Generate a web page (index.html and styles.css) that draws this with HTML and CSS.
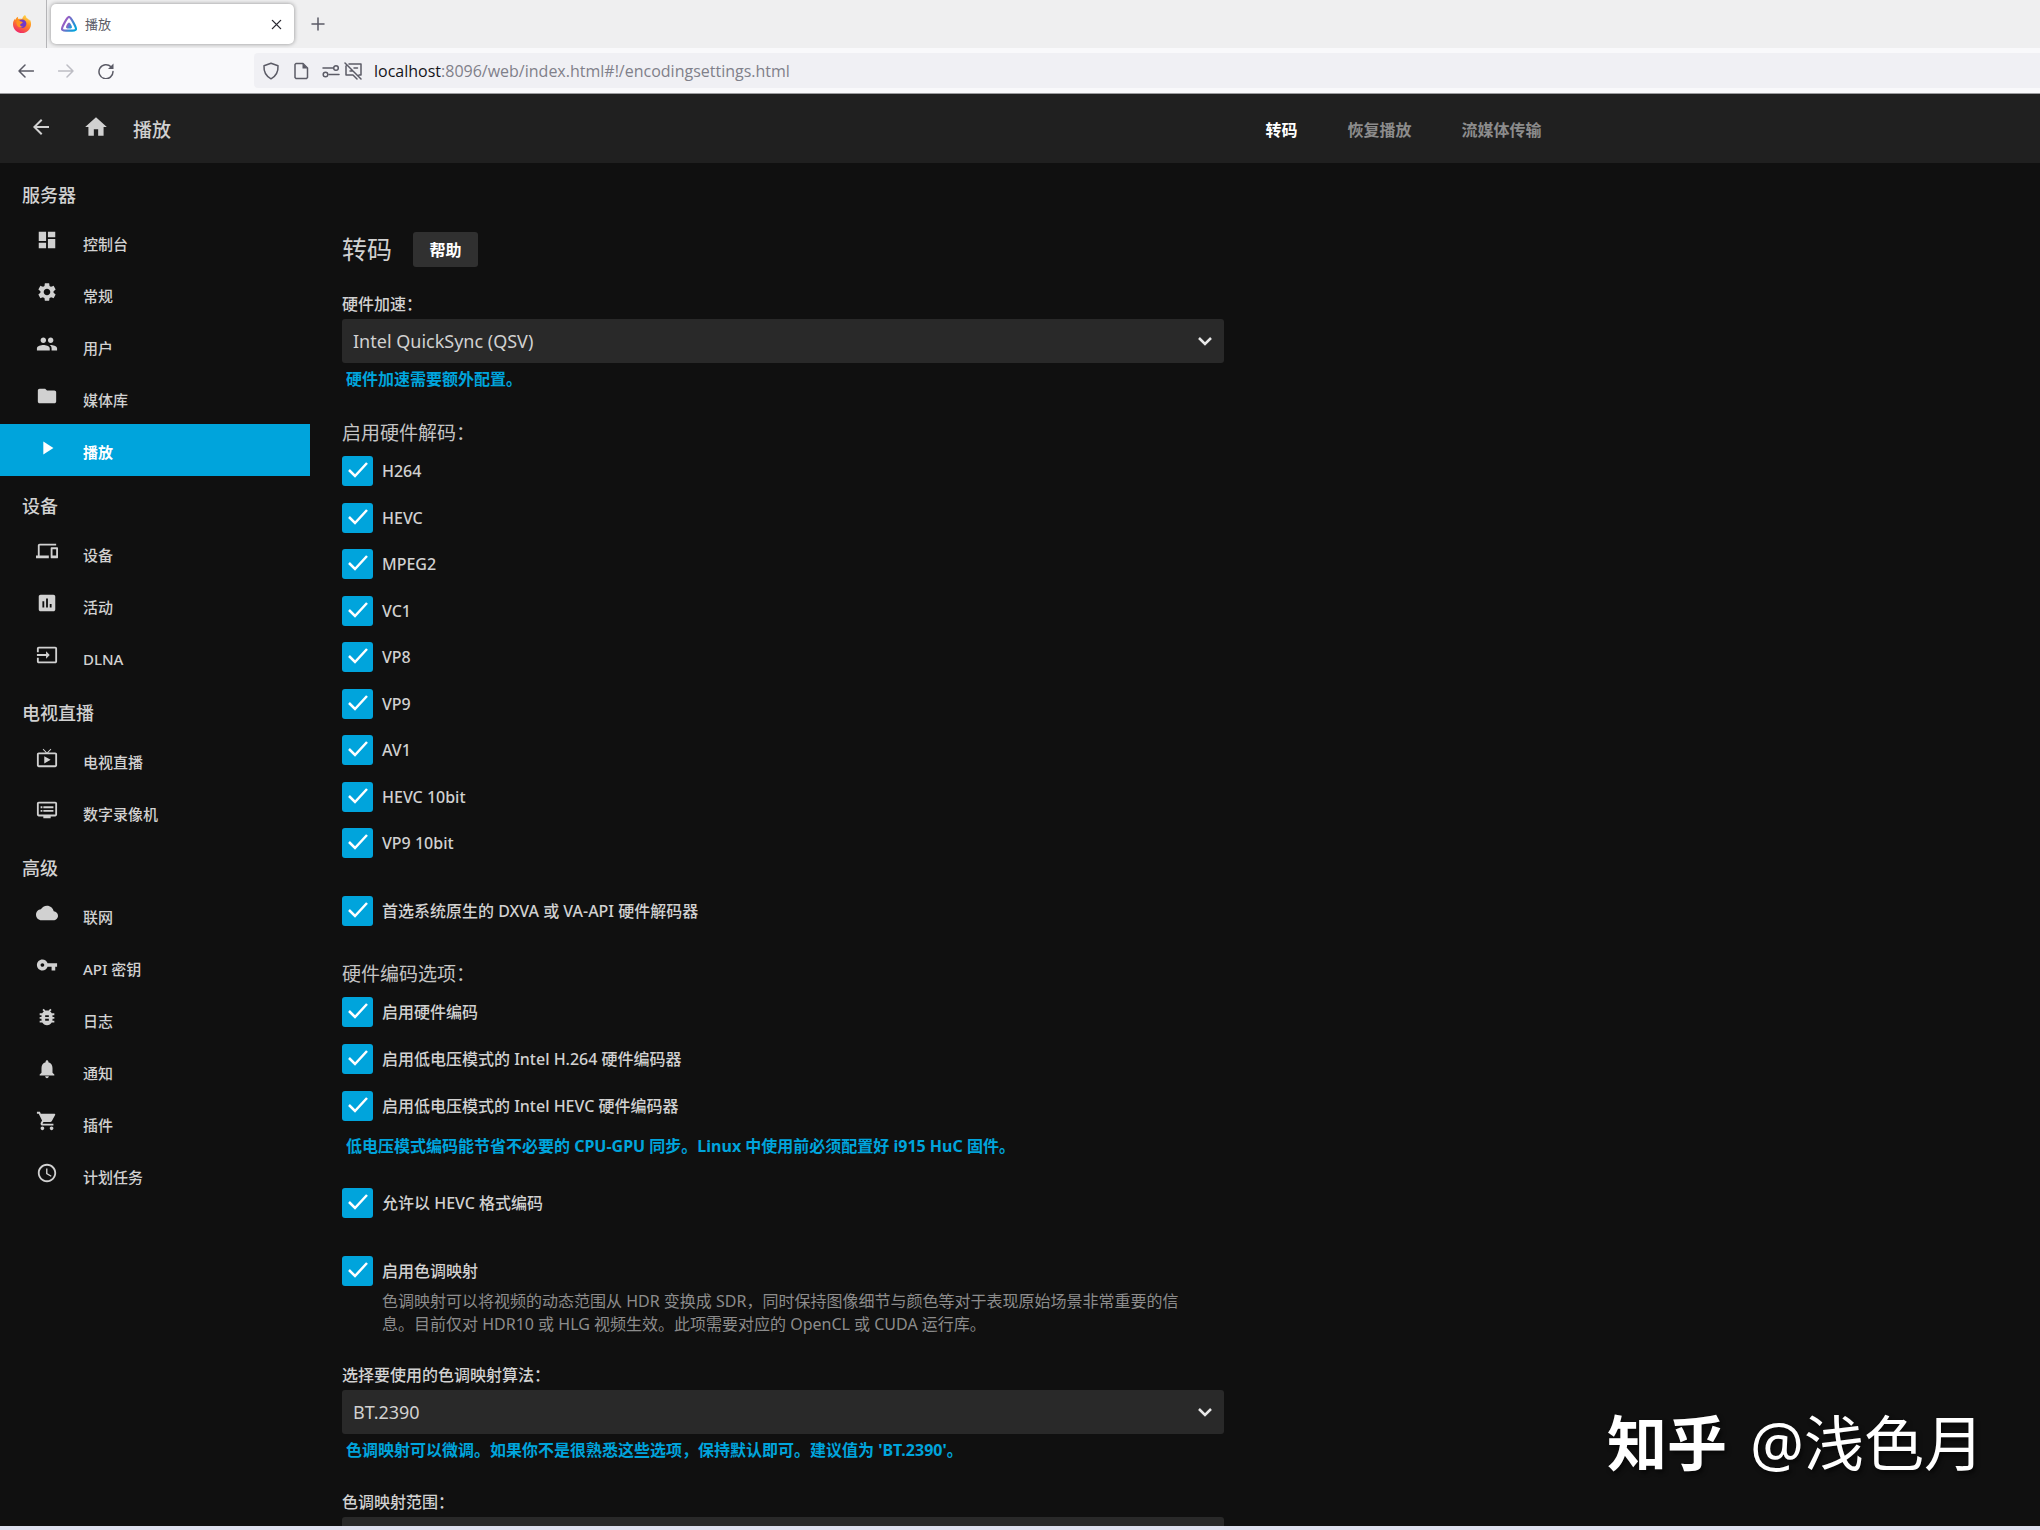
FILE: index.html
```html
<!DOCTYPE html>
<html lang="zh-CN">
<head>
<meta charset="utf-8">
<title>播放</title>
<link rel="stylesheet" href="styles.css">
</head>
<body>
<div class="browser">
  <div class="tabstrip">
    <div class="pinned">
      <svg class="firefox" viewBox="0 0 20 20" aria-hidden="true">
        <defs>
          <linearGradient id="flame" x1="0.8" y1="0" x2="0.3" y2="1"><stop offset="0" stop-color="#ffe14d"/><stop offset="0.45" stop-color="#ff8a1e"/><stop offset="1" stop-color="#f0246b"/></linearGradient>
        </defs>
        <path fill="url(#flame)" d="M13 1c1.200 1.300 1.400 2.200 1.500 3 1.300.5 2.300 1.500 2.800 2.500l.5-1c1 1.500 1.400 3.300 1.200 5.200C18.500 15.500 14.700 19 10 19S1.300 15.400 1 10.700C.9 8.200 1.700 6.200 3 4.800c0 .5 0 .9.200 1.200.6-1.500 1.600-2.700 2.900-3.300-.2.800-.1 1.700.3 2.400 1.300-.5 2.600-.4 3.700 0C10.500 3.500 11.500 2 13 1z"/>
        <circle cx="10.200" cy="9.800" r="4.200" fill="#7139c8"/>
        <path fill="#ff9320" d="M4.500 7c1.500-.8 3.200-.4 4.300.6 1 .1 1.700.4 2 1.200-.8.800-2 .8-2.600 1.600-.2 1.500 1.300 2.500 2.800 2.100-1.500 1.500-4.400 1.300-5.600-.7C4.600 10.300 4.200 8.600 4.500 7z"/>
      </svg>
    </div>
    <div class="tab">
      <svg class="favicon" viewBox="0 0 24 24" aria-hidden="true">
        <defs><linearGradient id="jelly" x1="0" y1="0.2" x2="1" y2="0.8"><stop offset="0.2" stop-color="#9a5cc3"/><stop offset="1" stop-color="#00a4dc"/></linearGradient></defs>
        <path fill="url(#jelly)" d="M12 10c-1.500 0-4.600 5.500-3.800 6.900.7 1.500 6.900 1.500 7.600 0C16.600 15.500 13.500 10 12 10z"/>
        <path fill="none" stroke="url(#jelly)" stroke-width="3" d="M12 2.500C9.800 2.500 1.800 17 2.800 19.300c1.100 2.200 17.300 2.200 18.400 0C22.200 17 14.200 2.500 12 2.500z"/>
      </svg>
      <span class="tab-title">播放</span>
      <button class="chrome-btn tab-close" aria-label="关闭标签页"><svg class="ico-s" viewBox="0 0 12 12"><path class="line" d="M1.500 1.500l9 9M10.500 1.500l-9 9"/></svg></button>
    </div>
    <button class="chrome-btn new-tab" aria-label="新标签页"><svg class="ico-m" viewBox="0 0 16 16"><path class="line" d="M8 2v12M2 8h12"/></svg></button>
  </div>
  <div class="toolbar">
    <div class="nav">
      <button class="chrome-btn" aria-label="后退"><svg class="ico-m" viewBox="0 0 16 16"><path class="line" d="M15.500 8H1M7 2L1 8l6 6"/></svg></button>
      <button class="chrome-btn" aria-label="前进" disabled><svg class="ico-m" viewBox="0 0 16 16"><path class="line" d="M.5 8H15M9 2l6 6-6 6"/></svg></button>
      <button class="chrome-btn" aria-label="刷新"><svg class="ico-m" viewBox="0 0 16 16"><path class="line" d="M13 3.800A7 7 0 1 0 15 8.500"/><path d="M15.500.5v5.500H10z"/></svg></button>
    </div>
    <div class="urlbar">
      <svg class="ico-l" viewBox="0 0 18 18" aria-hidden="true"><path class="line" d="M9 1.200l7 2.600c.3 5-1.500 10.200-7 13-5.500-2.800-7.300-8-7-13z"/></svg>
      <svg class="ico-l page-ico" viewBox="0 0 18 18" aria-hidden="true"><path class="line" d="M4 1.500h7L15.500 6v9.500l-1 1H4l-1-1v-13z"/><path d="M10.500 1.500L15.500 6.500h-5z"/></svg>
      <svg class="ico-l perm" viewBox="0 0 18 18" aria-hidden="true"><path class="line" d="M1 6h10M17 12.500H7"/><circle class="line" cx="14" cy="6" r="2.300"/><circle class="line" cx="3.500" cy="12.500" r="2.300"/></svg>
      <svg class="ico-l" viewBox="0 0 18 18" aria-hidden="true"><path class="line" d="M5 2h12v11h-2M2 4v9h7l4 4M6 9h3M10 6h3.500M1 1l16 16"/></svg>
      <div class="url"><b>localhost</b>:8096/web/index.html#!/encodingsettings.html</div>
    </div>
  </div>
</div>

<header class="appbar">
  <div class="appbar-left">
    <button class="icon-btn" aria-label="返回"><svg class="ico-xl" viewBox="0 0 24 24"><path d="M20 11H7.830l5.590-5.590L12 4l-8 8 8 8 1.410-1.410L7.830 13H20v-2z"/></svg></button>
    <button class="icon-btn" aria-label="首页"><svg class="ico-xxl" viewBox="0 0 24 24"><path d="M10 20v-6h4v6h5v-8h3L12 3 2 12h3v8z"/></svg></button>
    <h1 class="page-title">播放</h1>
  </div>
  <nav class="tabs">
    <a class="tab-link current" href="#transcoding">转码</a>
    <a class="tab-link" href="#resume">恢复播放</a>
    <a class="tab-link" href="#streaming">流媒体传输</a>
  </nav>
</header>

<div class="layout">
  <nav class="sidebar">
    <h3 class="group">服务器</h3>
    <a class="item" href="#"><svg class="side-ico" viewBox="0 0 24 24"><path d="M3 13h8V3H3v10zm0 8h8v-6H3v6zm10 0h8V11h-8v10zm0-18v6h8V3h-8z"/></svg>控制台</a>
    <a class="item" href="#"><svg class="side-ico" viewBox="0 0 24 24"><path d="M19.140 12.940c.04-.3.060-.61.060-.94 0-.32-.02-.64-.07-.94l2.030-1.580c.18-.14.230-.41.120-.61l-1.920-3.320c-.12-.22-.37-.29-.59-.22l-2.390.96c-.5-.38-1.030-.7-1.620-.94l-.36-2.540c-.04-.24-.24-.41-.48-.41h-3.840c-.24 0-.43.170-.47.410l-.36 2.540c-.59.240-1.130.57-1.620.94l-2.390-.96c-.22-.08-.47 0-.59.220L2.740 8.870c-.12.210-.08.470.120.610l2.030 1.580c-.05.3-.09.630-.09.940s.02.640.070.940l-2.030 1.580c-.18.140-.23.410-.12.610l1.920 3.320c.12.220.37.290.59.220l2.390-.96c.5.380 1.030.7 1.620.94l.36 2.540c.05.240.24.410.48.410h3.840c.24 0 .44-.17.470-.41l.36-2.540c.59-.24 1.130-.56 1.620-.94l2.390.96c.22.080.47 0 .59-.22l1.920-3.320c.12-.22.070-.47-.12-.61l-2.010-1.580zM12 15.600c-1.980 0-3.600-1.620-3.600-3.600s1.620-3.600 3.600-3.600 3.600 1.620 3.600 3.600-1.620 3.600-3.600 3.600z"/></svg>常规</a>
    <a class="item" href="#"><svg class="side-ico" viewBox="0 0 24 24"><path d="M16 11c1.660 0 2.990-1.340 2.990-3S17.660 5 16 5s-3 1.340-3 3 1.340 3 3 3zm-8 0c1.660 0 2.990-1.340 2.990-3S9.660 5 8 5 5 6.340 5 8s1.340 3 3 3zm0 2c-2.330 0-7 1.170-7 3.500V19h14v-2.500c0-2.330-4.670-3.500-7-3.500zm8 0c-.29 0-.62.020-.97.050 1.160.84 1.970 1.970 1.970 3.450V19h6v-2.500c0-2.330-4.670-3.500-7-3.500z"/></svg>用户</a>
    <a class="item" href="#"><svg class="side-ico" viewBox="0 0 24 24"><path d="M10 4H4c-1.100 0-1.990.9-1.990 2L2 18c0 1.100.9 2 2 2h16c1.100 0 2-.9 2-2V8c0-1.100-.9-2-2-2h-8l-2-2z"/></svg>媒体库</a>
    <a class="item active" href="#"><svg class="side-ico" viewBox="0 0 24 24"><path d="M8 5v14l11-7z"/></svg>播放</a>
    <h3 class="group">设备</h3>
    <a class="item" href="#"><svg class="side-ico" viewBox="0 0 24 24"><path d="M4 6h18V4H4c-1.100 0-2 .9-2 2v11H0v3h14v-3H4V6zm19 2h-6c-.55 0-1 .45-1 1v10c0 .55.450 1 1 1h6c.55 0 1-.45 1-1V9c0-.55-.45-1-1-1zm-1 9h-4v-7h4v7z"/></svg>设备</a>
    <a class="item" href="#"><svg class="side-ico" viewBox="0 0 24 24"><path d="M19 3H5c-1.100 0-2 .9-2 2v14c0 1.100.9 2 2 2h14c1.100 0 2-.9 2-2V5c0-1.100-.9-2-2-2zM9 17H7v-7h2v7zm4 0h-2V7h2v10zm4 0h-2v-4h2v4z"/></svg>活动</a>
    <a class="item" href="#"><svg class="side-ico" viewBox="0 0 24 24"><path d="M21 3.010H3c-1.100 0-2 .9-2 2V9h2V4.990h18v14.030H3V15H1v4.010c0 1.100.9 1.980 2 1.980h18c1.100 0 2-.88 2-1.980v-14c0-1.110-.9-2-2-2zM11 16l4-4-4-4v3H1v2h10v3z"/></svg>DLNA</a>
    <h3 class="group">电视直播</h3>
    <a class="item" href="#"><svg class="side-ico" viewBox="0 0 24 24"><path d="M21 6h-7.590l3.290-3.290L16 2l-4 4-4-4-.7.710L10.590 6H3c-1.100 0-2 .89-2 2v12c0 1.100.9 2 2 2h18c1.100 0 2-.9 2-2V8c0-1.110-.9-2-2-2zm0 14H3V8h18v12zM9 10v8l7-4z"/></svg>电视直播</a>
    <a class="item" href="#"><svg class="side-ico" viewBox="0 0 24 24"><path d="M21 3H3c-1.100 0-2 .9-2 2v12c0 1.100.9 2 2 2h5v2h8v-2h5c1.100 0 1.990-.9 1.990-2L23 5c0-1.100-.9-2-2-2zm0 14H3V5h18v12zm-2-9H8v2h11V8zm0 4H8v2h11v-2zM7 8H5v2h2V8zm0 4H5v2h2v-2z"/></svg>数字录像机</a>
    <h3 class="group">高级</h3>
    <a class="item" href="#"><svg class="side-ico" viewBox="0 0 24 24"><path d="M19.350 10.040C18.670 6.590 15.640 4 12 4 9.110 4 6.600 5.640 5.350 8.040 2.340 8.360 0 10.910 0 14c0 3.310 2.690 6 6 6h13c2.760 0 5-2.240 5-5 0-2.640-2.050-4.780-4.650-4.960z"/></svg>联网</a>
    <a class="item" href="#"><svg class="side-ico" viewBox="0 0 24 24"><path d="M12.650 10C11.830 7.670 9.610 6 7 6c-3.310 0-6 2.690-6 6s2.690 6 6 6c2.610 0 4.830-1.670 5.650-4H17v4h4v-4h2v-4H12.650zM7 14c-1.100 0-2-.9-2-2s.9-2 2-2 2 .9 2 2-.9 2-2 2z"/></svg>API 密钥</a>
    <a class="item" href="#"><svg class="side-ico" viewBox="0 0 24 24"><path d="M20 8h-2.810c-.45-.78-1.070-1.450-1.820-1.960L17 4.410 15.590 3l-2.170 2.170C12.960 5.060 12.490 5 12 5s-.96.060-1.410.17L8.410 3 7 4.410l1.620 1.630C7.880 6.550 7.260 7.220 6.810 8H4v2h2.090c-.05.330-.09.660-.09 1v1H4v2h2v1c0 .34.040.67.090 1H4v2h2.810c1.040 1.790 2.970 3 5.190 3s4.150-1.210 5.190-3H20v-2h-2.090c.05-.33.090-.66.090-1v-1h2v-2h-2v-1c0-.34-.04-.67-.09-1H20V8zm-6 8h-4v-2h4v2zm0-4h-4v-2h4v2z"/></svg>日志</a>
    <a class="item" href="#"><svg class="side-ico" viewBox="0 0 24 24"><path d="M12 22c1.100 0 2-.9 2-2h-4c0 1.100.89 2 2 2zm6-6v-5c0-3.070-1.640-5.640-4.500-6.320V4c0-.83-.67-1.500-1.500-1.500s-1.500.67-1.500 1.500v.68C7.630 5.360 6 7.920 6 11v5l-2 2v1h16v-1l-2-2z"/></svg>通知</a>
    <a class="item" href="#"><svg class="side-ico" viewBox="0 0 24 24"><path d="M7 18c-1.100 0-1.990.9-1.990 2S5.900 22 7 22s2-.9 2-2-.9-2-2-2zM1 2v2h2l3.600 7.590-1.350 2.450c-.16.280-.25.610-.25.960 0 1.100.9 2 2 2h12v-2H7.420c-.14 0-.25-.11-.25-.25l.03-.12.9-1.630h7.450c.75 0 1.410-.41 1.750-1.030l3.580-6.490c.08-.14.120-.31.120-.48 0-.55-.45-1-1-1H5.210l-.94-2H1zm16 16c-1.100 0-1.990.9-1.990 2s.89 2 1.990 2 2-.9 2-2-.9-2-2-2z"/></svg>插件</a>
    <a class="item" href="#"><svg class="side-ico" viewBox="0 0 24 24"><path d="M11.990 2C6.470 2 2 6.480 2 12s4.470 10 9.990 10C17.520 22 22 17.520 22 12S17.520 2 11.990 2zM12 20c-4.420 0-8-3.580-8-8s3.580-8 8-8 8 3.580 8 8-3.580 8-8 8zm.5-13H11v6l5.250 3.150.75-1.230-4.500-2.670z"/></svg>计划任务</a>
  </nav>

  <main class="content">
    <form class="form">
      <div class="title-row">
        <h2 class="title">转码</h2>
        <button class="help" type="button">帮助</button>
      </div>

      <div class="field">
        <label class="field-label" for="hwaccel">硬件加速：</label>
        <div class="select-box">
          <select id="hwaccel"><option>Intel QuickSync (QSV)</option></select>
          <svg class="chevron" viewBox="0 0 16 16" aria-hidden="true"><path d="M2 5l6 6 6-6"/></svg>
        </div>
        <p class="hint">硬件加速需要额外配置。</p>
      </div>

      <h3 class="subhead">启用硬件解码：</h3>
      <div class="checks codecs">
        <label class="check"><input type="checkbox" checked><span>H264</span></label>
        <label class="check"><input type="checkbox" checked><span>HEVC</span></label>
        <label class="check"><input type="checkbox" checked><span>MPEG2</span></label>
        <label class="check"><input type="checkbox" checked><span>VC1</span></label>
        <label class="check"><input type="checkbox" checked><span>VP8</span></label>
        <label class="check"><input type="checkbox" checked><span>VP9</span></label>
        <label class="check"><input type="checkbox" checked><span>AV1</span></label>
        <label class="check"><input type="checkbox" checked><span>HEVC 10bit</span></label>
        <label class="check"><input type="checkbox" checked><span>VP9 10bit</span></label>
      </div>
      <div class="checks before-head">
        <label class="check"><input type="checkbox" checked><span>首选系统原生的 DXVA 或 VA-API 硬件解码器</span></label>
      </div>

      <h3 class="subhead">硬件编码选项：</h3>
      <div class="checks with-hint">
        <label class="check"><input type="checkbox" checked><span>启用硬件编码</span></label>
        <label class="check"><input type="checkbox" checked><span>启用低电压模式的 Intel H.264 硬件编码器</span></label>
        <label class="check"><input type="checkbox" checked><span>启用低电压模式的 Intel HEVC 硬件编码器</span></label>
      </div>
      <p class="hint group-hint">低电压模式编码能节省不必要的 CPU-GPU 同步。Linux 中使用前必须配置好 i915 HuC 固件。</p>

      <div class="checks">
        <label class="check"><input type="checkbox" checked><span>允许以 HEVC 格式编码</span></label>
      </div>
      <div class="checks with-desc">
        <label class="check"><input type="checkbox" checked aria-describedby="tonemap-desc"><span>启用色调映射</span></label>
      </div>
      <p class="desc" id="tonemap-desc">色调映射可以将视频的动态范围从 HDR 变换成 SDR，同时保持图像细节与颜色等对于表现原始场景非常重要的信息。目前仅对 HDR10 或 HLG 视频生效。此项需要对应的 OpenCL 或 CUDA 运行库。</p>

      <div class="field">
        <label class="field-label" for="algo">选择要使用的色调映射算法：</label>
        <div class="select-box">
          <select id="algo"><option>BT.2390</option></select>
          <svg class="chevron" viewBox="0 0 16 16" aria-hidden="true"><path d="M2 5l6 6 6-6"/></svg>
        </div>
        <p class="hint">色调映射可以微调。如果你不是很熟悉这些选项，保持默认即可。建议值为 'BT.2390'。</p>
      </div>
      <div class="field">
        <label class="field-label" for="range">色调映射范围：</label>
        <div class="select-box">
          <select id="range"><option>自动</option></select>
          <svg class="chevron" viewBox="0 0 16 16" aria-hidden="true"><path d="M2 5l6 6 6-6"/></svg>
        </div>
      </div>
    </form>
  </main>
</div>

<div class="watermark"><b>知乎</b><span>@浅色月</span></div>
<div class="taskbar"></div>
</body>
</html>
```
FILE: styles.css
```css
* { box-sizing: border-box; }

body {
  margin: 0;
  height: 100vh;
  display: flex;
  flex-direction: column;
  overflow: hidden;
  background: #101010;
  color: #d1d1d1;
  font: 500 16px/24px "Noto Sans", "Noto Sans CJK SC", sans-serif;
}

h1, h2, h3, p { margin: 0; font-weight: 500; }
a { color: inherit; text-decoration: none; }
button { font: inherit; border: 0; padding: 0; background: none; color: inherit; }
svg { flex: none; fill: currentColor; }

/* Browser window */
.browser { flex: none; background: #f9f9fb; color: #5b5b66; border-bottom: 1px solid #9c9c9f; }
.tabstrip { height: 48px; display: flex; align-items: center; background: #efeff0; }
.pinned { width: 47px; height: 48px; padding-left: 12px; display: flex; align-items: center; border-right: 1px solid #b5b5b8; }
.firefox { width: 20px; height: 20px; }
.tab {
  width: 243px; height: 40px; margin-left: 4px; padding: 0 12px 0 9px;
  display: flex; align-items: center; gap: 7px;
  background: #fff; border-radius: 5px; box-shadow: 0 0 4px rgba(0, 0, 0, 0.4);
}
.favicon { width: 18px; height: 18px; }
.tab-title { flex: 1; font-size: 13px; font-weight: 400; }
.chrome-btn { display: flex; color: #5b5b66; }
.chrome-btn:disabled { color: #bdbdc4; }
.tab-close { color: #2b2a33; }
.new-tab { margin-left: 16px; }
.ico-s { width: 11px; height: 11px; }
.ico-m { width: 16px; height: 16px; }
.ico-l { width: 18px; height: 18px; }
.line { fill: none; stroke: currentColor; stroke-width: 1.500; stroke-linejoin: round; stroke-linecap: round; }
.toolbar { height: 45px; display: flex; align-items: center; }
.nav { width: 254px; padding-left: 18px; display: flex; gap: 24px; }
.urlbar { flex: 1; height: 35px; padding-left: 8px; display: flex; align-items: center; background: #f0f0f4; border-radius: 4px 0 0 4px; }
.page-ico { margin: 0 12px; }
.perm { margin-right: 4px; }
.url { margin-left: 12px; font: 400 16px/24px "Open Sans", sans-serif; color: #80808a; }
.url b { font-weight: 400; color: #15141a; }

/* App header */
.appbar { flex: none; height: 69px; display: flex; align-items: center; background: #202020; }
.appbar-left { width: 61%; padding-left: 29px; display: flex; align-items: center; }
.icon-btn { display: flex; padding-bottom: 4px; }
.ico-xl { width: 24px; height: 24px; margin-right: 30px; }
.ico-xxl { width: 26px; height: 26px; margin-right: 24px; }
.page-title { font-size: 19px; line-height: 28px; padding-top: 3px; }
.tabs { display: flex; gap: 50px; padding-left: 21px; padding-top: 2px; font-weight: 700; color: #8c8c8c; }
.current { color: #fff; }

/* Dashboard layout */
.layout { flex: 1; min-height: 0; overflow: hidden; display: flex; }
.sidebar { flex: none; width: 310px; padding-top: 2px; }
.group { height: 51px; padding: 16px 22px 0; font-size: 18px; line-height: 28px; }
.item { height: 52px; display: flex; align-items: center; padding: 4px 0 0 36px; font-size: 15px; }
.side-ico { width: 22px; height: 22px; margin: 0 25px 8px 0; }
.active { background: #00a4dc; color: #fff; font-weight: 700; }

.content { flex: 1; padding: 69px 32px 0; }
.form { max-width: 882px; }
.title-row { display: flex; align-items: center; gap: 21px; margin-bottom: 25px; }
.title { font-size: 25px; line-height: 35px; font-weight: 400; }
.help { width: 65px; height: 35px; background: #303030; border-radius: 3px; font-weight: 700; color: #fff; }

.field { margin-bottom: 28px; }
.field-label { display: block; line-height: 24px; margin-bottom: 3px; }
.select-box { display: grid; align-items: center; background: #292929; border-radius: 3px; }
.select-box > * { grid-area: 1 / 1; }
.select-box select { appearance: none; width: 100%; height: 44px; padding: 0 40px 0 11px; border: 0; background: none; color: #d1d1d1; font: inherit; font-size: 18px; font-weight: 400; }
.chevron { justify-self: end; width: 16px; height: 16px; margin-right: 11px; fill: none; stroke: #e8e8e8; stroke-width: 2.500; pointer-events: none; }
.hint { padding: 4px 4px 0; font-weight: 700; color: #00a4dc; }

.subhead { font-size: 19px; line-height: 28px; margin-bottom: 9px; font-weight: 400; color: #c4c4c4; }
.checks { display: flex; flex-direction: column; gap: 17px; margin-bottom: 38px; }
.codecs { height: 402px; gap: 0; justify-content: space-between; }
.check { display: flex; align-items: center; gap: 9px; height: 30px; }
.check input {
  appearance: none; flex: none; width: 31px; height: 30px; margin: 0; border-radius: 3px;
  background: #00a4dc url("data:image/svg+xml,%3Csvg xmlns='http://www.w3.org/2000/svg' viewBox='0 0 31 30'%3E%3Cpath d='M7 14l6 6L25 7' fill='none' stroke='white' stroke-width='2.500'/%3E%3C/svg%3E") center / 100% 100%;
}
.before-head { margin-bottom: 34px; }
.with-hint { margin-bottom: 9px; }
.group-hint { margin-bottom: 30px; }
.with-desc { margin-bottom: 4px; }
.desc { padding: 0 24px 0 40px; line-height: 23px; font-weight: 400; color: #8c8c8c; margin-bottom: 27px; }

.watermark {
  position: absolute; right: 56px; bottom: 45px; display: flex; align-items: center; gap: 23px;
  color: #fff; font-size: 60px; line-height: 84px; font-weight: 400; text-shadow: 2px 3px 4px rgba(0, 0, 0, 0.6);
}
.taskbar { flex: none; height: 4px; background: #dfe1f0; }
```
